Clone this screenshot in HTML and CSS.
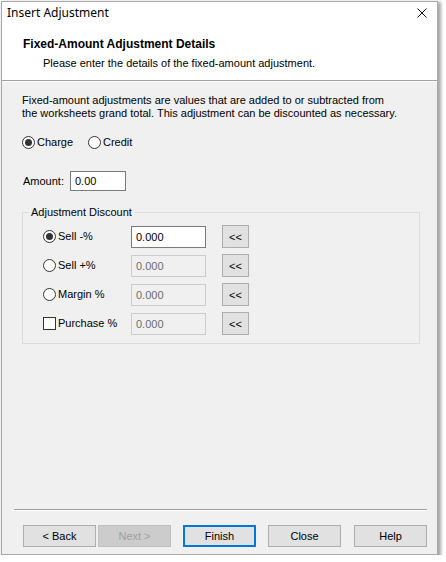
FILE: index.html
```html
<!DOCTYPE html>
<html>
<head>
<meta charset="utf-8">
<link rel="stylesheet" href="styles.css">
</head>
<body>
<div class="window">
  <div class="titlebar">
    <span class="title">Insert Adjustment</span>
    <svg class="close" width="10" height="10" viewBox="0 0 10 10"><path d="M0.5 0.5 L9.5 9.5 M9.5 0.5 L0.5 9.5" stroke="#111" stroke-width="1"/></svg>
  </div>
  <div class="header">
    <div class="header-title">Fixed-Amount Adjustment Details</div>
    <div class="header-sub">Please enter the details of the fixed-amount adjustment.</div>
  </div>
  <div class="content">
    <p class="desc">Fixed-amount adjustments are values that are added to or subtracted from<br>the worksheets grand total. This adjustment can be discounted as necessary.</p>
    <div class="type-row">
      <label class="opt"><span class="radio checked"></span>Charge</label>
      <label class="opt"><span class="radio"></span>Credit</label>
    </div>
    <div class="amount-row">
      <span class="amount-label">Amount:</span>
      <span class="textbox amount">0.00</span>
    </div>
    <fieldset class="group">
      <legend>Adjustment Discount</legend>
      <div class="disc-row">
        <label class="opt disc-label"><span class="radio checked"></span>Sell -%</label>
        <span class="textbox disc">0.000</span>
        <span class="btn small">&lt;&lt;</span>
      </div>
      <div class="disc-row">
        <label class="opt disc-label"><span class="radio"></span>Sell +%</label>
        <span class="textbox disc disabled">0.000</span>
        <span class="btn small">&lt;&lt;</span>
      </div>
      <div class="disc-row">
        <label class="opt disc-label"><span class="radio"></span>Margin %</label>
        <span class="textbox disc disabled">0.000</span>
        <span class="btn small">&lt;&lt;</span>
      </div>
      <div class="disc-row">
        <label class="opt disc-label"><span class="check"></span>Purchase %</label>
        <span class="textbox disc disabled">0.000</span>
        <span class="btn small">&lt;&lt;</span>
      </div>
    </fieldset>
    <div class="footer">
      <div class="footer-sep"></div>
      <div class="buttons">
        <span class="btn wide">&lt; Back</span>
        <span class="btn wide off">Next &gt;</span>
        <span class="btn wide primary">Finish</span>
        <span class="btn wide">Close</span>
        <span class="btn wide">Help</span>
      </div>
    </div>
  </div>
</div>
</body>
</html>
```
FILE: styles.css
```css
html, body {
  margin: 0;
  padding: 0;
  background: #ffffff;
}
body {
  padding: 1px 0 0 1px;
  font-family: "Liberation Sans", Arial, sans-serif;
  font-size: 11px;
  color: #000;
}
.window {
  width: 435px;
  height: 552px;
  border: 1px solid #a8a8a8;
  background: #f0f0f0;
  box-shadow: 2px 2px 3px 1px rgba(0,0,0,0.35);
  display: flex;
  flex-direction: column;
}
.titlebar {
  height: 24px;
  background: #fff;
  display: flex;
  align-items: center;
  justify-content: space-between;
  padding: 0 10px 0 5px;
}
.title {
  font-family: "Noto Sans", "Open Sans", sans-serif;
  font-size: 12px;
  line-height: 22px;
  margin-top: -2px;
}
.close {
  display: block;
  margin-top: -2px;
}
.header {
  height: 55px;
  background: #fff;
  border-bottom: 1px solid #a0a0a0;
  padding: 11px 0 0 21px;
  box-sizing: border-box;
}
.header-title {
  font-weight: bold;
  font-size: 12px;
  line-height: 14px;
}
.header-sub {
  line-height: 13px;
  margin: 6px 0 0 20px;
}
.content {
  flex: 1;
  display: flex;
  flex-direction: column;
  padding: 0 0 0 20px;
  border-top: 1px solid #fff;
}
.desc {
  margin: 12px 0 0;
  line-height: 13px;
}
.type-row {
  display: flex;
  gap: 0;
  margin-top: 16px;
  height: 13px;
  align-items: center;
}
.opt {
  display: flex;
  align-items: center;
  line-height: 13px;
}
.type-row .opt:first-child {
  width: 66px;
}
.radio {
  width: 11px;
  height: 11px;
  border: 1px solid #333;
  border-radius: 50%;
  background: #fff;
  position: relative;
  margin-right: 2px;
  flex: none;
}
.radio.checked::after {
  content: "";
  position: absolute;
  left: 2px;
  top: 2px;
  width: 7px;
  height: 7px;
  border-radius: 50%;
  background: #333;
}
.check {
  width: 11px;
  height: 11px;
  border: 1px solid #333;
  background: #fff;
  margin-right: 2px;
  flex: none;
}
.amount-row {
  display: flex;
  align-items: center;
  margin-top: 22px;
  padding-left: 1px;
}
.amount-label {
  width: 47px;
}
.textbox {
  box-sizing: border-box;
  display: block;
  border: 1px solid #7a7a7a;
  background: #fff;
  padding-left: 4px;
}
.amount {
  width: 56px;
  height: 20px;
  line-height: 18px;
}
.group {
  margin: 15px 0 0 0;
  width: 398px;
  box-sizing: border-box;
  border: 1px solid #dcdcdc;
  padding: 6px 0 8px 20px;
  min-width: 0;
}
.group legend {
  padding: 0 2px;
  margin-left: -14px;
  line-height: 13px;
}
.disc-row {
  display: flex;
  align-items: center;
  height: 23px;
  margin-bottom: 6px;
}
.disc-row:last-child {
  margin-bottom: 0;
}
.disc-label {
  width: 88px;
}
.disc {
  width: 75px;
  height: 22px;
  line-height: 20px;
  font-size: 11px;
}
.disc.disabled {
  border-color: #cccccc;
  background: #f0f0f0;
  color: #6d6d6d;
}
.btn {
  box-sizing: border-box;
  display: flex;
  align-items: center;
  justify-content: center;
  border: 1px solid #adadad;
  background: #e1e1e1;
}
.btn.small {
  width: 27px;
  height: 23px;
  margin-left: 16px;
}
.footer {
  margin-top: auto;
  padding-bottom: 7px;
}
.footer-sep {
  width: 413px;
  margin-left: -8px;
  border-top: 1px solid #a0a0a0;
  border-bottom: 1px solid #fff;
}
.buttons {
  display: flex;
  margin-top: 14px;
  padding-left: 1px;
}
.btn.wide {
  width: 73px;
  height: 22px;
}
.btn.wide:nth-child(2) {
  margin-left: 2px;
}
.btn.wide:nth-child(3),
.btn.wide:nth-child(4) {
  margin-left: 12px;
}
.btn.wide:nth-child(5) {
  margin-left: 13px;
}
.btn.off {
  background: #cccccc;
  border-color: #bfbfbf;
  color: #a0a0a0;
}
.btn.primary {
  border: 2px solid #0078d7;
}
```
